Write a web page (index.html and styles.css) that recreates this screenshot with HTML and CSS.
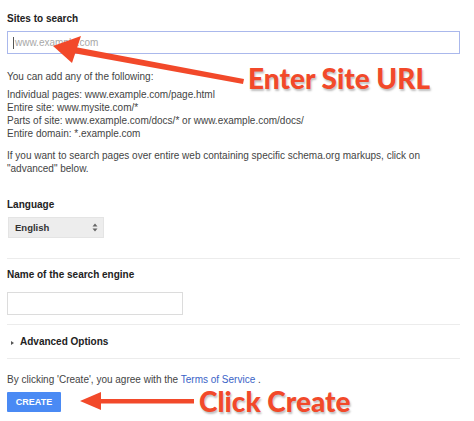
FILE: index.html
```html
<!DOCTYPE html>
<html lang="en">
<head>
<meta charset="utf-8">
<title>Create search engine</title>
<link rel="stylesheet" href="styles.css">
</head>
<body>
<main class="form">
  <h2 class="label first">Sites to search</h2>
  <div class="url-input"><span class="caret"></span><span class="placeholder">www.example.com</span></div>
  <p class="help intro">You can add any of the following:</p>
  <p class="help list">Individual pages: www.example.com/page.html<br>Entire site: www.mysite.com/*<br>Parts of site: www.example.com/docs/* or www.example.com/docs/<br>Entire domain: *.example.com</p>
  <p class="help note">If you want to search pages over entire web containing specific schema.org markups, click on "advanced" below.</p>

  <h2 class="label lang">Language</h2>
  <div class="select"><span>English</span>
    <svg class="updown" width="6" height="9" viewBox="0 0 6 9"><path d="M3 0.5 L5.5 3.5 H0.5 Z M3 8.5 L5.5 5.5 H0.5 Z" fill="#666"/></svg>
  </div>

  <hr class="rule rule-1">

  <h2 class="label name">Name of the search engine</h2>
  <div class="name-input"></div>

  <hr class="rule rule-2">

  <div class="advanced"><span class="tri"></span><span>Advanced Options</span></div>

  <hr class="rule rule-3">

  <p class="help terms">By clicking 'Create', you agree with the <a href="#">Terms of Service</a> .</p>
  <button class="create" type="button">CREATE</button>
</main>

<svg class="arrow arrow-top" width="474" height="421" viewBox="0 0 474 421">
  <path d="M75 47 L244 79 L243 84 L73 53 Z" fill="#f2492a"/>
  <path d="M53 46 L81 36 L72 63 Z" fill="#f2492a"/>
</svg>
<div class="callout callout-top">Enter Site URL</div>

<svg class="arrow arrow-bottom" width="474" height="421" viewBox="0 0 474 421">
  <path d="M96 399 H194 V403.5 H96 Z" fill="#f2492a"/>
  <path d="M80 401 L101 392 L101 410 Z" fill="#f2492a"/>
</svg>
<div class="callout callout-bottom">Click Create</div>
</body>
</html>
```

FILE: styles.css
```css
html, body {
  margin: 0;
  padding: 0;
  background: #ffffff;
}

body {
  width: 474px;
  height: 421px;
  overflow: hidden;
  position: relative;
  font-family: "Liberation Sans", Arial, sans-serif;
  font-size: 10px;
  line-height: 13px;
  color: #444;
}

.form {
  padding: 12px 14px 0 7px;
  display: flex;
  flex-direction: column;
  align-items: flex-start;
}

.label {
  margin: 0;
  font-size: 10px;
  line-height: 13px;
  font-weight: bold;
  color: #222;
}

.url-input {
  margin-top: 6px;
  box-sizing: border-box;
  width: 453px;
  height: 23px;
  border: 1px solid #aab8ec;
  display: flex;
  align-items: center;
  padding-left: 5px;
}

.caret {
  width: 1px;
  height: 12px;
  background: #555;
  margin-right: 1px;
}

.placeholder {
  color: #a8a8a8;
  font-size: 10px;
}

.help {
  margin: 0;
}

.intro { margin-top: 16px; }
.list { margin-top: 5px; }
.note { margin-top: 9px; width: 440px; }

.lang { margin-top: 23px; }

.select {
  margin-top: 6px;
  margin-left: 1px;
  box-sizing: border-box;
  width: 96px;
  height: 21px;
  background: #ededed;
  border: 1px solid #e4e4e4;
  display: flex;
  align-items: center;
  justify-content: space-between;
  padding: 0 5px 0 6px;
  font-size: 9.5px;
  font-weight: bold;
  color: #333;
}

.rule {
  align-self: stretch;
  border: 0;
  height: 1px;
  background: #ececec;
  margin: 0;
}

.rule-1 { margin-top: 20px; }

.name { margin-top: 9px; }

.name-input {
  margin-top: 11px;
  box-sizing: border-box;
  width: 176px;
  height: 23px;
  border: 1px solid #dcdcdc;
}

.rule-2 { margin-top: 9px; }

.advanced {
  margin-top: 10px;
  display: flex;
  align-items: center;
  font-weight: bold;
  color: #222;
}

.tri {
  width: 0;
  height: 0;
  border-top: 2px solid transparent;
  border-bottom: 2px solid transparent;
  border-left: 3px solid #555;
  margin: 3px 6px 0 4px;
}

.rule-3 { margin-top: 10px; }

.terms { margin-top: 14px; }

.terms a {
  color: #3a63c7;
  text-decoration: none;
}

.create {
  margin-top: 6px;
  width: 54px;
  height: 20px;
  border: 0;
  border-radius: 1px;
  background: #4a8af4;
  color: #fff;
  font-family: "Liberation Sans", Arial, sans-serif;
  font-size: 9px;
  font-weight: bold;
  padding: 0;
}

.arrow {
  position: absolute;
  left: 0;
  top: 0;
  pointer-events: none;
}

.callout {
  position: absolute;
  font-family: Lato, "Open Sans", sans-serif;
  font-weight: 900;
  color: #f2492a;
  text-shadow: 1px 2px 2px rgba(0,0,0,0.25);
  white-space: nowrap;
  line-height: 1;
  font-size: 28px;
}

.callout-top {
  left: 248px;
  top: 64px;
}

.callout-bottom {
  left: 199px;
  top: 387px;
}
```
